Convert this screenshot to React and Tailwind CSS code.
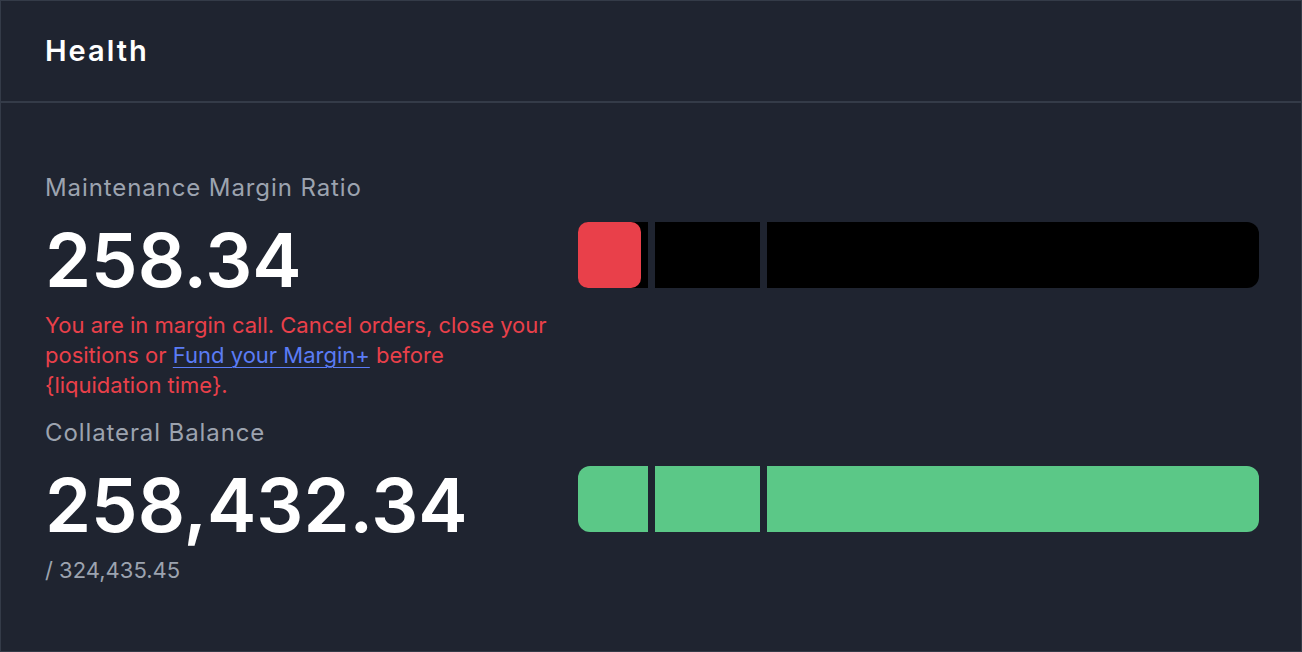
import React from 'react';

const font = { fontFamily: 'Inter, "Noto Sans", sans-serif' };

const Bar = ({ color, fill, offset }) => (
  <div className={`flex h-[66px] flex-1 gap-[7px] ${offset}`}>
    <div className={`relative w-[70px] rounded-l-xl ${color}`}>
      {fill && <div className={`absolute inset-y-0 left-0 w-[63px] rounded-[10px] ${fill}`} />}
    </div>
    <div className={`w-[105px] ${color}`} />
    <div className={`flex-1 rounded-r-xl ${color}`} />
  </div>
);

const App = () => {
  return (
    <div className="h-[652px] w-[1302px] bg-[#1f2430]" style={font}>
      <div className="flex h-full flex-col border border-[#343b48]">
        <div className="flex h-[102px] items-center border-b-2 border-[#343b48] px-[44px]">
          <h1 className="text-[29px] font-semibold tracking-[2px] text-white">Health</h1>
        </div>

        <div className="flex flex-col px-[44px] pt-[70px] pr-[42px]">
          <section>
            <p className="text-[24px] leading-[30px] tracking-[0.9px] text-[#9ca3af]">Maintenance Margin Ratio</p>
            <div className="mt-[20px] flex items-start gap-4">
              <div className="w-[517px] text-[74px] font-semibold leading-none text-white">258.34</div>
              <Bar color="bg-black" fill="bg-[#e9404a]" offset="-mt-[1px]" />
            </div>
            <p className="mt-[13px] w-[517px] text-[22px] leading-[30px] text-[#e9404a]">
              You are in margin call. Cancel orders, close your positions or{' '}
              <a href="#" className="text-[#5b7cf5] underline underline-offset-4 decoration-1">Fund your Margin+</a>{' '}
              before {'{liquidation time}'}.
            </p>
          </section>

          <section className="mt-[18px]">
            <p className="text-[24px] leading-[30px] tracking-[0.9px] text-[#9ca3af]">Collateral Balance</p>
            <div className="mt-[20px] flex items-start gap-4">
              <div className="w-[517px] text-[74px] font-semibold leading-none text-white">258,432.34</div>
              <Bar color="bg-[#5bc887]" offset="-mt-[2px]" />
            </div>
            <p className="mt-[14px] text-[22px] leading-[28px] text-[#9ca3af]">/ 324,435.45</p>
          </section>
        </div>
      </div>
    </div>
  );
};

export default App;
